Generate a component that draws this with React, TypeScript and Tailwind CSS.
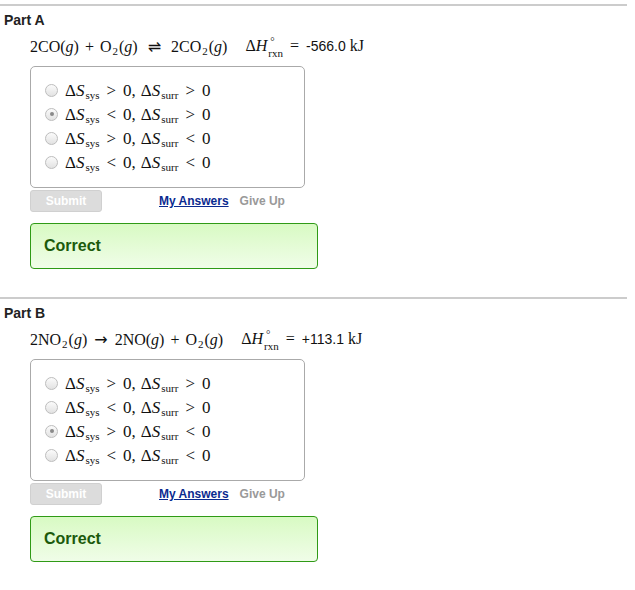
import React from "react";

const serif = { fontFamily: '"Liberation Serif", "DejaVu Serif", serif' };

function Sub({ children }: { children: React.ReactNode }) {
  return <span className="text-[11px] relative top-[4px] ml-[1px]">{children}</span>;
}

function I({ children }: { children: React.ReactNode }) {
  return <span className="italic">{children}</span>;
}

function DS({ sub }: { sub: string }) {
  return (
    <span>
      Δ<I>S</I>
      <span className="text-[11px] relative top-[3px] ml-[1px]">{sub}</span>
    </span>
  );
}

function Option({ a, b, selected }: { a: string; b: string; selected?: boolean }) {
  return (
    <div className="flex items-center h-[24px]">
      <span className="w-[13px] h-[13px] rounded-full border border-[#bdbdbd] bg-gradient-to-b from-[#fbfbfb] to-[#e2e2e2] flex items-center justify-center shrink-0">
        {selected && <span className="w-[4px] h-[4px] rounded-full bg-[#8a8a8a]" />}
      </span>
      <span className="ml-[7px] text-[17px] text-[#111] whitespace-nowrap leading-none" style={serif}>
        <DS sub="sys" />
        <span className="mx-[7px]">{a}</span>0,
        <span className="ml-[5px]">
          <DS sub="surr" />
        </span>
        <span className="mx-[7px]">{b}</span>0
      </span>
    </div>
  );
}

function DeltaH({ value }: { value: string }) {
  return (
    <span className="inline-flex items-baseline">
      Δ<I>H</I>
      <span className="inline-flex flex-col items-start text-[11px] leading-[9px] relative top-[1px] ml-[1px]">
        <span className="relative -top-[7px] left-[2px]">°</span>
        <span className="relative -top-[4px]">rxn</span>
      </span>
      <span className="mx-[7px]">=</span>
      <span className="text-[14px]" style={{ fontFamily: '"Liberation Sans", Arial, sans-serif' }}>
        {value}
      </span>
      <span className="ml-[4px]">kJ</span>
    </span>
  );
}

function Arrow({ children, wide }: { children: React.ReactNode; wide?: boolean }) {
  return (
    <span
      className={wide ? "mx-[10px] text-[16px]" : "mx-[7px] text-[16px]"}
      style={{ fontFamily: '"DejaVu Sans", sans-serif' }}
    >
      {children}
    </span>
  );
}

function Part({
  title,
  equation,
  selected,
}: {
  title: string;
  equation: React.ReactNode;
  selected: number;
}) {
  const opts: [string, string][] = [
    [">", ">"],
    ["<", ">"],
    [">", "<"],
    ["<", "<"],
  ];
  return (
    <div className="border-t-2 border-[#cccccc] pb-[28px]">
      <div className="pl-[4px] pt-[6px] text-[14px] leading-[16px] font-bold text-[#222]">{title}</div>
      <div className="ml-[30px] mt-[9px] h-[20px] flex items-center text-[16px] text-[#111] whitespace-nowrap" style={serif}>
        {equation}
      </div>
      <div className="ml-[30px] mt-[9px] w-[275px] h-[122px] border border-[#aaaaaa] rounded-[5px] pl-[14px] pt-[11px]">
        {opts.map((o, i) => (
          <Option key={i} a={o[0]} b={o[1]} selected={i === selected} />
        ))}
      </div>
      <div className="ml-[30px] mt-[2px] flex items-center h-[22px]">
        <div className="w-[72px] h-[22px] rounded-[3px] bg-[#dcdcdc] border border-[#d0d0d0] flex items-center justify-center text-white text-[12px] font-bold">
          Submit
        </div>
        <span className="ml-[57px] text-[12px] font-bold text-[#0b2a8f] underline">My Answers</span>
        <span className="ml-[11px] text-[12px] font-bold text-[#999999]">Give Up</span>
      </div>
      <div className="ml-[30px] mt-[11px] w-[288px] h-[46px] rounded-[4px] border border-[#2f9a16] bg-gradient-to-b from-[#d8fac3] to-[#f0fde8] flex items-center pl-[13px]">
        <span className="text-[16px] font-bold text-[#1b5a0c]">Correct</span>
      </div>
    </div>
  );
}

export default function App() {
  const eqA = (
    <>
      <span>2CO(</span>
      <I>g</I>
      <span>)</span>
      <span className="mx-[6px]">+</span>
      <span>O</span>
      <Sub>2</Sub>
      <span className="ml-[1px]">(</span>
      <I>g</I>
      <span>)</span>
      <Arrow wide>⇌</Arrow>
      <span>2CO</span>
      <Sub>2</Sub>
      <span className="ml-[1px]">(</span>
      <I>g</I>
      <span>)</span>
      <span className="ml-[18px]" />
      <DeltaH value="-566.0" />
    </>
  );
  const eqB = (
    <>
      <span>2NO</span>
      <Sub>2</Sub>
      <span className="ml-[1px]">(</span>
      <I>g</I>
      <span>)</span>
      <Arrow>→</Arrow>
      <span>2NO(</span>
      <I>g</I>
      <span>)</span>
      <span className="mx-[6px]">+</span>
      <span>O</span>
      <Sub>2</Sub>
      <span className="ml-[1px]">(</span>
      <I>g</I>
      <span>)</span>
      <span className="ml-[18px]" />
      <DeltaH value="+113.1" />
    </>
  );
  return (
    <div className="w-[627px] pt-[4px] bg-white min-h-[590px]" style={{ fontFamily: '"Liberation Sans", Arial, sans-serif' }}>
      <Part title="Part A" equation={eqA} selected={1} />
      <Part title="Part B" equation={eqB} selected={2} />
    </div>
  );
}
